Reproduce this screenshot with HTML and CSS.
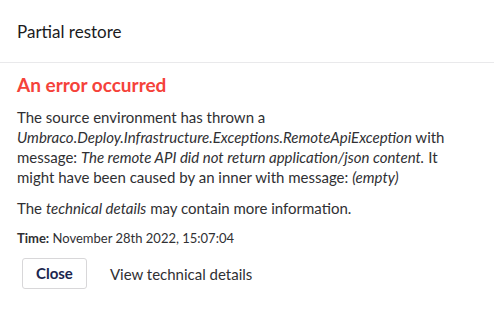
FILE: index.html
```html
<!DOCTYPE html>
<html lang="en">
<head>
    <meta charset="UTF-8">
    <meta name="viewport" content="width=device-width, initial-scale=1.0">
    <title>Partial restore</title>
    <link rel="stylesheet" href="styles.css">
</head>
<body>
    <div class="dialog">
        <div class="dialog-header">
            <h1>Partial restore</h1>
        </div>
        <div class="dialog-body">
            <h2 class="error-title">An error occurred</h2>
            <p>The source environment has thrown a <em>Umbraco.Deploy.Infrastructure.Exceptions.RemoteApiException</em> with message: <em>The remote API did not return application/json content.</em> It might have been caused by an inner with message: <em>(empty)</em></p>
            <p>The <em>technical details</em> may contain more information.</p>
            <div class="time"><strong>Time:</strong> November 28th 2022, 15:07:04</div>
            <div class="actions">
                <button class="btn" id="close-btn">Close</button>
                <button class="link-btn" id="details-btn">View technical details</button>
            </div>
        </div>
    </div>
</body>
</html>
```
FILE: styles.css
```css
body {
    margin: 0;
    background-color: #fff;
    font-family: Lato, "Open Sans", sans-serif;
    color: #303033;
}
.dialog-header {
    height: 62px;
    display: flex;
    align-items: center;
    padding: 0 17px;
    border-bottom: 1px solid #e9e9eb;
}
.dialog-header h1 {
    margin: 0;
    font-size: 17px;
    font-weight: 400;
    color: #1b1b1d;
}
.dialog-body {
    padding: 9px 17px 0 17px;
}
.error-title {
    margin: 0 0 9px 0;
    font-size: 19px;
    font-weight: 700;
    color: #f5423a;
    line-height: 26px;
}
.dialog-body p {
    margin: 0 0 11px 0;
    font-size: 15px;
    line-height: 20px;
}
.time {
    font-size: 13px;
    line-height: 18px;
    margin-top: 4px;
}
.actions {
    display: flex;
    align-items: center;
    margin-top: 11px;
    padding-left: 5px;
}
.btn {
    font-family: inherit;
    background-color: #fff;
    color: #1b264f;
    font-size: 15px;
    line-height: 19px;
    font-weight: 700;
    padding: 5px 13px;
    border: 1px solid #d8d7d9;
    border-radius: 3px;
    cursor: pointer;
}
.link-btn {
    font-family: inherit;
    background: none;
    border: none;
    color: #303033;
    font-size: 15px;
    margin-left: 23px;
    padding: 0;
    cursor: pointer;
}
```
